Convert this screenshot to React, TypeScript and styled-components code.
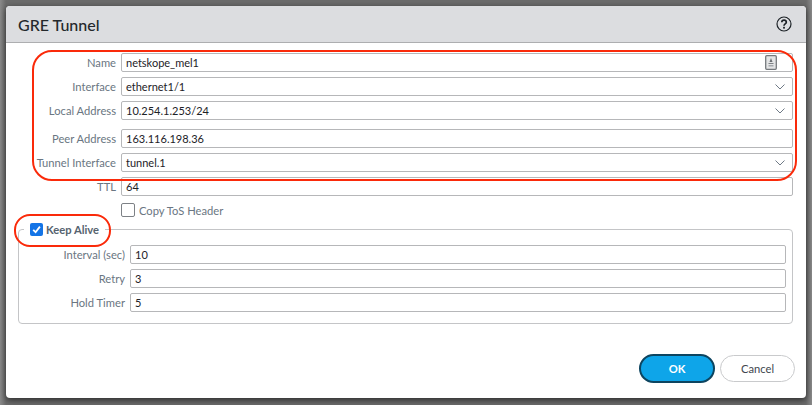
import React from "react";
import styled, { createGlobalStyle } from "styled-components";

const GlobalStyle = createGlobalStyle`
  html, body {
    margin: 0;
    padding: 0;
    height: 405px;
    overflow: hidden;
    background: #6c6c6c;
    font-family: Lato, "Open Sans", sans-serif;
  }
`;

const Backdrop = styled.div`
  width: 812px;
  height: 405px;
  padding: 6px 6px 7px 6px;
  box-sizing: border-box;
  background: linear-gradient(90deg, #8a8a8a 0, #6b6b6b 6px, #6b6b6b 806px, #8a8a8a 812px);
`;

const Dialog = styled.div`
  position: relative;
  width: 800px;
  height: 392px;
  background: #fff;
  border-radius: 4px;
  overflow: hidden;
  display: flex;
  flex-direction: column;
  box-shadow: 0 2px 6px rgba(0, 0, 0, 0.6);
`;

const Header = styled.div`
  height: 36px;
  flex: none;
  display: flex;
  align-items: center;
  justify-content: space-between;
  padding: 0 12px;
  background: #dcdde0;
  border-bottom: 1px solid #adaeb0;
`;

const Title = styled.div`
  font-size: 16px;
  font-weight: 500;
  color: #24282c;
`;

const Body = styled.div`
  flex: 1;
  display: flex;
  flex-direction: column;
  padding: 10px 13px 0 12px;
`;

const Row = styled.div<{ $gap?: number }>`
  display: flex;
  align-items: center;
  gap: 5px;
  height: 19px;
  margin-bottom: ${(p) => p.$gap ?? 5}px;
`;

const Label = styled.label<{ $width: number }>`
  width: ${(p) => p.$width}px;
  flex: none;
  text-align: right;
  font-size: 11.2px;
  color: #6a7682;
`;

const Field = styled.div`
  flex: 1;
  height: 19px;
  box-sizing: border-box;
  display: flex;
  align-items: center;
  justify-content: space-between;
  padding: 0 4px;
  background: #fff;
  border: 1px solid #b6b7b9;
  border-radius: 2px;
  font-size: 11px;
  color: #1d2227;
`;

const Caret = styled.svg`
  width: 10px;
  height: 6px;
  margin-right: 3px;
  fill: none;
  stroke: #6f7a86;
  stroke-width: 1;
`;

const LockIcon = styled.svg`
  width: 12px;
  height: 15px;
  margin-right: 11px;
`;

const CheckRow = styled.div`
  display: flex;
  align-items: center;
  gap: 4px;
  height: 14px;
  margin: 2px 0 0 103px;
  font-size: 11.2px;
  color: #6a7682;
`;

const EmptyBox = styled.span`
  width: 12px;
  height: 12px;
  border: 1px solid #7d8186;
  border-radius: 2px;
  background: #fff;
`;

const Group = styled.div`
  position: relative;
  margin: 12px 0 0 0;
  height: 95px;
  box-sizing: border-box;
  border: 1px solid #c4c5c7;
  border-radius: 4px;
  padding: 15px 6px 0 0;
`;

const GroupLegend = styled.div`
  position: absolute;
  top: -10px;
  left: 5px;
  height: 18px;
  display: flex;
  align-items: center;
  gap: 3px;
  padding: 0 6px 0 6px;
  background: #fff;
  font-size: 11.2px;
  font-weight: 700;
  color: #56636f;
`;

const BlueCheck = styled.span`
  width: 13px;
  height: 13px;
  border-radius: 2px;
  background: #1474e6;
  display: flex;
  align-items: center;
  justify-content: center;
`;

const Footer = styled.div`
  display: flex;
  justify-content: flex-end;
  align-items: center;
  gap: 5px;
  margin: 30px -2px 0 0;
`;

const OkButton = styled.button`
  width: 76px;
  height: 29px;
  border-radius: 15px;
  border: 2px solid #0d4560;
  background: #0ea5e9;
  color: #fff;
  font: 700 11.2px Lato, sans-serif;
`;

const CancelButton = styled.button`
  width: 75px;
  height: 27px;
  border-radius: 14px;
  border: 1px solid #c9cacc;
  background: #fff;
  color: #3e464e;
  font: 400 11.2px Lato, sans-serif;
`;

const RedOutline = styled.div<{ $x: number; $y: number; $w: number; $h: number; $r: number }>`
  position: absolute;
  left: ${(p) => p.$x}px;
  top: ${(p) => p.$y}px;
  width: ${(p) => p.$w}px;
  height: ${(p) => p.$h}px;
  box-sizing: border-box;
  border: 2px solid #fa2a0a;
  border-radius: ${(p) => p.$r}px;
  pointer-events: none;
`;

const CaretDown = () => (
  <Caret viewBox="0 0 10 6">
    <path d="M0.5 0.5 L5 5 L9.5 0.5" />
  </Caret>
);

const topLabelWidth = 98;
const keepLabelWidth = 106;

export default function App() {
  return (
    <Backdrop>
      <GlobalStyle />
      <Dialog>
        <Header>
          <Title>GRE Tunnel</Title>
          <svg width="16" height="16" viewBox="0 0 16 16" style={{ marginRight: 2 }}>
            <circle cx="8" cy="8" r="7" fill="none" stroke="#1d2227" strokeWidth="1.2" />
            <path d="M5.8 6.2 C5.8 3.4 10.3 3.4 10.3 6.2 C10.3 8 8 7.8 8 9.8" fill="none" stroke="#1d2227" strokeWidth="1.7" />
            <rect x="7.1" y="10.8" width="1.8" height="1.8" fill="#1d2227" />
          </svg>
        </Header>
        <Body>
          <Row>
            <Label $width={topLabelWidth}>Name</Label>
            <Field>
              netskope_mel1
              <LockIcon viewBox="0 0 12 15">
                <rect x="0.7" y="0.7" width="10.6" height="13.6" rx="1" fill="#e4e5e6" stroke="#75797d" strokeWidth="1.3" />
                <path d="M6 3 L7.5 7 L4.5 7 Z" fill="#6d7175" />
                <rect x="3.5" y="8" width="5" height="1" fill="#7d8185" />
                <rect x="3.5" y="10" width="5" height="1.5" fill="#a5a9ad" />
              </LockIcon>
            </Field>
          </Row>
          <Row>
            <Label $width={topLabelWidth}>Interface</Label>
            <Field>
              ethernet1/1
              <CaretDown />
            </Field>
          </Row>
          <Row $gap={9}>
            <Label $width={topLabelWidth}>Local Address</Label>
            <Field>
              10.254.1.253/24
              <CaretDown />
            </Field>
          </Row>
          <Row>
            <Label $width={topLabelWidth}>Peer Address</Label>
            <Field>163.116.198.36</Field>
          </Row>
          <Row>
            <Label $width={topLabelWidth}>Tunnel Interface</Label>
            <Field>
              tunnel.1
              <CaretDown />
            </Field>
          </Row>
          <Row>
            <Label $width={topLabelWidth}>TTL</Label>
            <Field>64</Field>
          </Row>
          <CheckRow>
            <EmptyBox />
            Copy ToS Header
          </CheckRow>
          <Group>
            <GroupLegend>
              <BlueCheck>
                <svg width="9" height="9" viewBox="0 0 9 9">
                  <path d="M1.2 4.8 L3.6 7.2 L7.9 1.6" fill="none" stroke="#fff" strokeWidth="1.8" />
                </svg>
              </BlueCheck>
              Keep Alive
            </GroupLegend>
            <Row>
              <Label $width={keepLabelWidth}>Interval (sec)</Label>
              <Field>10</Field>
            </Row>
            <Row>
              <Label $width={keepLabelWidth}>Retry</Label>
              <Field>3</Field>
            </Row>
            <Row>
              <Label $width={keepLabelWidth}>Hold Timer</Label>
              <Field>5</Field>
            </Row>
          </Group>
          <Footer>
            <OkButton>OK</OkButton>
            <CancelButton>Cancel</CancelButton>
          </Footer>
        </Body>
        <RedOutline $x={26} $y={44} $w={765} $h={131} $r={20} />
        <RedOutline $x={8} $y={208} $w={97} $h={33} $r={16} />
      </Dialog>
    </Backdrop>
  );
}
